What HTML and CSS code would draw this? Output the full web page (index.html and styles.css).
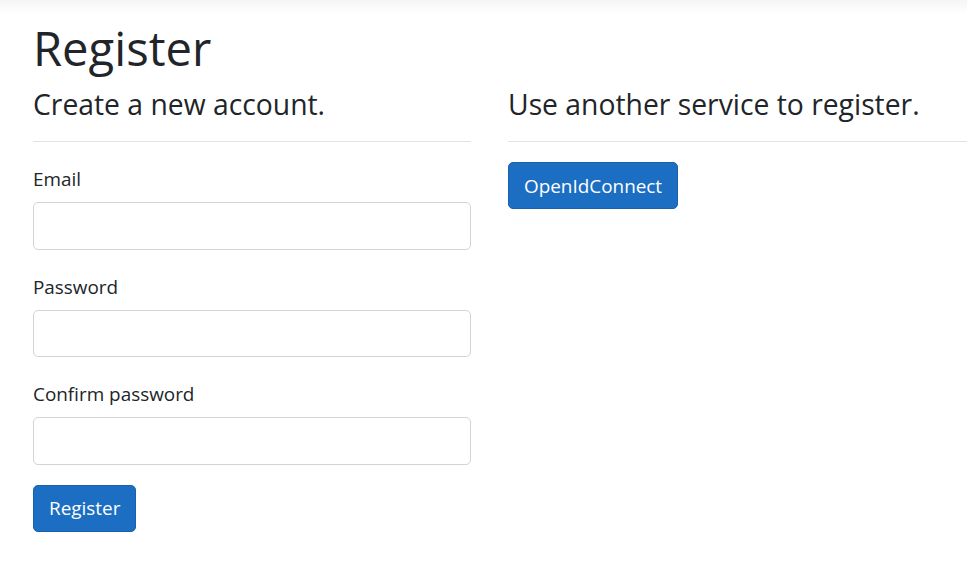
FILE: index.html
```html
<!DOCTYPE html>
<html lang="en">
<head>
<meta charset="utf-8">
<title>Register</title>
<link rel="stylesheet" href="styles.css">
</head>
<body>
<div class="shadow"></div>
<main class="container">
  <h1 class="title">Register</h1>
  <div class="row">
    <section class="col-left">
      <form>
        <h2 class="subtitle">Create a new account.</h2>
        <hr class="rule">
        <div class="group">
          <label class="label" for="email">Email</label>
          <input class="input" id="email" type="email">
        </div>
        <div class="group">
          <label class="label" for="pw">Password</label>
          <input class="input" id="pw" type="password">
        </div>
        <div class="group">
          <label class="label" for="cpw">Confirm password</label>
          <input class="input" id="cpw" type="password">
        </div>
        <button class="btn" type="button">Register</button>
      </form>
    </section>
    <section class="col-right">
      <h2 class="subtitle">Use another service to register.</h2>
      <hr class="rule rule-right">
      <div>
        <button class="btn" type="button">OpenIdConnect</button>
      </div>
    </section>
  </div>
</main>
</body>
</html>
```
FILE: styles.css
```css
* { box-sizing: border-box; }
html, body { margin: 0; padding: 0; }
body {
  width: 967px;
  height: 571px;
  overflow: hidden;
  background: #fff;
  color: #212529;
  font-family: "Open Sans", "Noto Sans", sans-serif;
  font-size: 19px;
  line-height: 1.5;
}
.shadow {
  height: 14px;
  margin-bottom: -14px;
  background: linear-gradient(to bottom, rgba(0,0,0,0.04), rgba(0,0,0,0));
}
.container {
  padding: 18px 0 0 33px;
}
.title {
  margin: 0;
  font-size: 47.2px;
  font-weight: 400;
  line-height: 60px;
}
.row {
  display: flex;
  gap: 37px;
}
.col-left { width: 438px; flex: none; }
.col-right { flex: 1; min-width: 0; }
.subtitle {
  margin: 0;
  font-size: 28.3px;
  font-weight: 400;
  line-height: 48px;
  padding-top: 2px;
  white-space: nowrap;
}
.rule {
  margin: 13px 0 22px;
  border: 0;
  border-top: 1px solid #e3e3e4;
}
.rule-right { margin-bottom: 20px; }
.group { margin-bottom: 22px; }
.label {
  display: block;
  font-size: 18.9px;
  line-height: 30px;
  margin-bottom: 8px;
}
.input {
  display: block;
  width: 100%;
  height: 47.5px;
  border: 1px solid #ced4da;
  border-radius: 5px;
  background: #fff;
  font: inherit;
}
.btn {
  display: inline-block;
  height: 47px;
  padding: 0 15px;
  border: 1px solid #1861ac;
  border-radius: 5px;
  background: #1b6ec2;
  color: #fff;
  font-family: inherit;
  font-size: 18.9px;
  line-height: 30px;
}
.group + .btn { margin-top: -2px; }
```
